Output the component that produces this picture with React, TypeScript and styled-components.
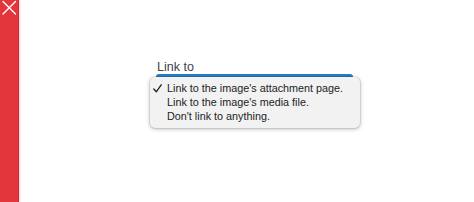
import React from "react";
import styled, { createGlobalStyle } from "styled-components";

const Global = createGlobalStyle`
  html, body { margin: 0; padding: 0; background: #fff; }
  body { font-family: "Liberation Sans", Arial, sans-serif; }
`;

const Page = styled.div`
  display: flex;
  width: 474px;
  height: 202px;
  overflow: hidden;
`;

const Sidebar = styled.div`
  width: 18px;
  height: 100%;
  background: #e2363c;
  border-right: 1px solid #c92e33;
  box-shadow: 1px 0 2px rgba(226, 54, 60, 0.25);
  flex: none;
`;

const CloseIcon = styled.svg`
  display: block;
  width: 18px;
  height: 16px;
`;

const Main = styled.div`
  flex: 1;
  padding: 60px 0 0 138px;
`;

const Field = styled.div`
  position: relative;
  width: 204px;
`;

const Label = styled.div`
  font-size: 12.5px;
  color: #3c434a;
  line-height: 14px;
`;

const SelectTop = styled.div`
  height: 3px;
  border-radius: 3px 3px 0 0;
  background: #2a7dc4;
  width: 197px;
  margin-left: -1px;
`;

const Menu = styled.ul`
  position: absolute;
  top: 17px;
  left: -7px;
  width: 210px;
  margin: 0;
  padding: 4px 0 5px;
  list-style: none;
  background: #f2f2f2;
  border-radius: 5px;
  box-shadow: 0 1px 4px rgba(0, 0, 0, 0.28), 0 0 0 0.5px rgba(0, 0, 0, 0.15);
`;

const Item = styled.li`
  position: relative;
  font-size: 10.8px;
  line-height: 14px;
  color: #222;
  padding-left: 17px;
  white-space: nowrap;
`;

const Check = styled.svg`
  position: absolute;
  left: 3px;
  top: 3px;
  width: 9px;
  height: 9px;
`;

export default function App() {
  return (
    <>
      <Global />
      <Page>
        <Sidebar>
          <CloseIcon viewBox="0 0 18 16">
            <path d="M3 1.5 L15.5 14 M15.5 1.5 L3 14" stroke="#fff" strokeWidth="1.4" strokeLinecap="round" />
          </CloseIcon>
        </Sidebar>
        <Main>
          <Field>
            <Label>Link to</Label>
            <SelectTop />
            <Menu>
              <Item>
                <Check viewBox="0 0 9 9">
                  <path d="M0.8 5 L3.3 7.8 L8.2 0.8" fill="none" stroke="#222" strokeWidth="1.3" strokeLinecap="round" strokeLinejoin="round" />
                </Check>
                Link to the image's attachment page.
              </Item>
              <Item>Link to the image's media file.</Item>
              <Item>Don't link to anything.</Item>
            </Menu>
          </Field>
        </Main>
      </Page>
    </>
  );
}
